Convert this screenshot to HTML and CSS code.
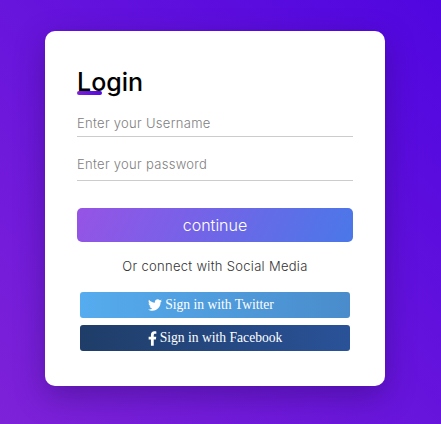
FILE: index.html
```html
<!DOCTYPE html>
<html lang="en">
<head>
    <meta charset="UTF-8">
    <meta name="viewport" content="width=device-width, initial-scale=1.0">
    <title>Login</title>
    <link rel="stylesheet" href="styles.css">
</head>
<body>
    <div class="card">
        <h1 class="title">Login</h1>
        <form class="login-form">
            <input class="field" type="text" placeholder="Enter your Username">
            <input class="field" type="password" placeholder="Enter your password">
            <button class="continue" type="button">continue</button>
        </form>
        <p class="connect">Or connect with Social Media</p>
        <div class="social">
            <a class="social-btn twitter" href="#">
                <svg class="icon-twitter" viewBox="0 0 512 512" aria-hidden="true"><path fill="currentColor" d="M459.37 151.716c.325 4.548.325 9.097.325 13.645 0 138.72-105.583 298.558-298.558 298.558-59.452 0-114.68-17.219-161.137-47.106 8.447.974 16.568 1.299 25.34 1.299 49.055 0 94.213-16.568 130.274-44.832-46.132-.975-84.792-31.188-98.112-72.772 6.498.974 12.995 1.624 19.818 1.624 9.421 0 18.843-1.3 27.614-3.573-48.081-9.747-84.143-51.98-84.143-102.985v-1.299c13.969 7.797 30.214 12.67 47.431 13.319-28.264-18.843-46.781-51.005-46.781-87.391 0-19.492 5.197-37.36 14.294-52.954 51.655 63.675 129.3 105.258 216.365 109.807-1.624-7.797-2.599-15.918-2.599-24.04 0-57.828 46.782-104.934 104.934-104.934 30.213 0 57.502 12.67 76.67 33.137 23.715-4.548 46.456-13.32 66.599-25.34-7.798 24.366-24.366 44.833-46.132 57.827 21.117-2.273 41.584-8.122 60.426-16.243-14.292 20.791-32.161 39.308-52.628 54.253z"/></svg>
                Sign in with Twitter
            </a>
            <a class="social-btn facebook" href="#">
                <svg class="icon-facebook" viewBox="0 0 320 512" aria-hidden="true"><path fill="currentColor" d="M279.14 288l14.22-92.66h-88.91v-60.13c0-25.35 12.42-50.06 52.24-50.06h40.42V6.26S260.43 0 225.36 0c-73.22 0-121.08 44.38-121.08 124.72v70.62H22.89V288h81.39v224h100.17V288z"/></svg>
                Sign in with Facebook
            </a>
        </div>
    </div>
</body>
</html>
```

FILE: styles.css
```css
* {
    box-sizing: border-box;
}

html, body {
    height: 100%;
}

body {
    margin: 0;
    padding: 31px 56px 0 45px;
    overflow: hidden;
    background: linear-gradient(45deg, #7e22d8, #5006e0);
    font-family: "Inter", "Liberation Sans", sans-serif;
}

.card {
    width: 340px;
    height: 355px;
    padding: 35px 32px 0;
    background-color: #fff;
    border-radius: 10px;
    box-shadow: 0 10px 30px rgba(40, 10, 90, 0.4);
}

.title {
    position: relative;
    margin: 0;
    font-size: 25px;
    line-height: 32px;
    font-weight: 500;
    color: #000;
}

.title::after {
    content: "";
    position: absolute;
    left: 0;
    top: 25px;
    width: 25px;
    height: 4px;
    border-radius: 4px;
    background: linear-gradient(45deg, #7e22d8, #5006e0);
}

.login-form {
    display: flex;
    flex-direction: column;
    margin-top: 1px;
}

.field {
    height: 44px;
    padding: 10px 0 0;
    border: 0;
    border-bottom: 1px solid #ccc;
    outline: none;
    font-family: inherit;
    font-size: 13px;
    letter-spacing: 0.3px;
    font-weight: 300;
    background: transparent;
}

.field::placeholder {
    color: #808080;
    opacity: 1;
}

.field:first-child {
    height: 38px;
}

.continue {
    height: 34px;
    margin-top: 27px;
    border: 0;
    border-radius: 5px;
    background: linear-gradient(115deg, #9653e6, #4a78e8);
    color: #fff;
    font-family: inherit;
    font-size: 16px;
    font-weight: 300;
    cursor: pointer;
}

.connect {
    margin: 15px 0 0;
    text-align: center;
    font-size: 13px;
    letter-spacing: 0.3px;
    line-height: 18px;
    font-weight: 300;
    color: #333;
}

.social {
    display: flex;
    flex-direction: column;
    gap: 7px;
    margin: 17px 3px 0;
}

.social-btn {
    display: flex;
    align-items: center;
    justify-content: center;
    gap: 3px;
    height: 26px;
    border-radius: 3px;
    color: #fff;
    font-family: "Liberation Serif", serif;
    font-size: 13.6px;
    text-decoration: none;
}

.twitter {
    padding-right: 8px;
    background: linear-gradient(90deg, #55acee, #4a8ccb);
}

.facebook {
    background: linear-gradient(90deg, #1f3d68, #2a5298);
}

.icon-twitter {
    width: 14px;
    height: 14px;
}

.icon-facebook {
    width: 9px;
    height: 15px;
}
```
